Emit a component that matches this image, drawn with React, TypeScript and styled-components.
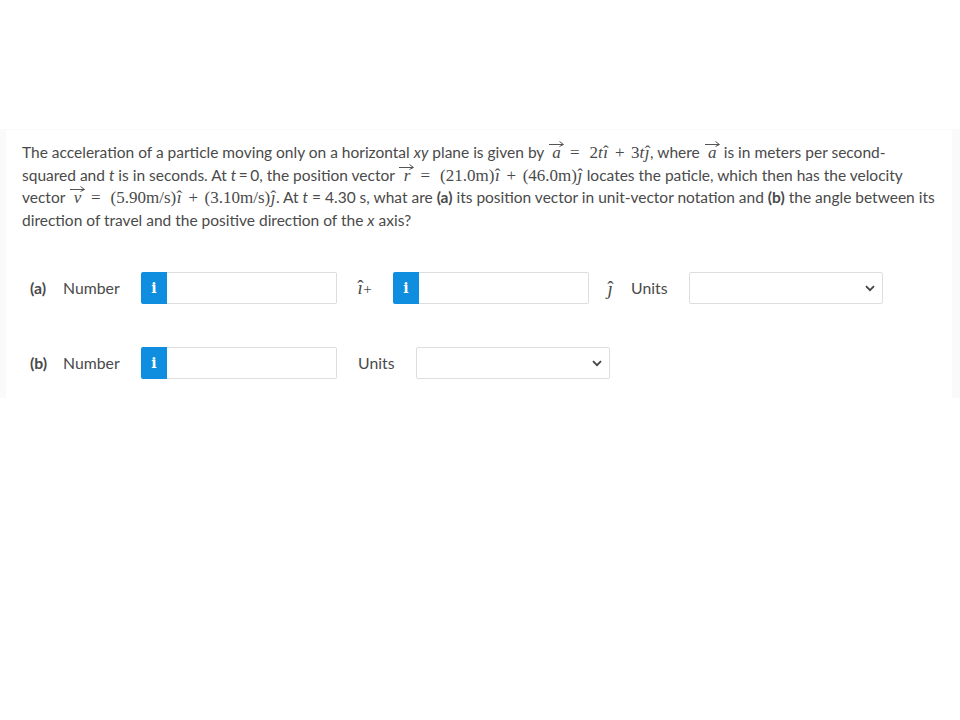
import React from 'react'
import styled, { createGlobalStyle } from 'styled-components'

const Global = createGlobalStyle`
  html, body {
    margin: 0;
    padding: 0;
    background: #fff;
  }
`

function App() {
  return (
    <>
      <Global />
      <Page>
        <Band>
          <Panel>
            <Question>
              The acceleration of a particle moving only on a horizontal <em>xy</em> plane is given by{' '}
              <Vec>a</Vec>
              <Equals>=</Equals>
              <MathText>2<i>t</i><Hat>ı</Hat><Plus>+</Plus>3<i>t</i><Hat>ȷ</Hat></MathText>, where <Vec>a</Vec> is in meters per second-
              <br />
              squared and <em>t</em> is in seconds. At <Tight><em>t</em> = 0,</Tight> the position vector <Vec>r</Vec>
              <Equals>=</Equals>
              <MathText>(21.0m)<Hat>ı</Hat><Plus>+</Plus>(46.0m)<Hat>ȷ</Hat></MathText> locates the paticle, which then has the velocity
              <br />
              vector <Vec>v</Vec>
              <Equals>=</Equals>
              <MathText>(5.90m/s)<Hat>ı</Hat><Plus>+</Plus>(3.10m/s)<Hat>ȷ</Hat></MathText>. At <em>t</em> = 4.30 s, what are <b>(a)</b> its
              position vector in unit-vector notation and <b>(b)</b> the angle between its
              <br />
              direction of travel and the positive direction of the <em>x</em> axis?
            </Question>
            <AnswerRow $top={41}>
              <PartLabel>(a)</PartLabel>
              <FieldLabel $width={78}>Number</FieldLabel>
              <NumberField />
              <Suffix $width={56} $pad={20}><Hat>ı</Hat><small>+</small></Suffix>
              <NumberField />
              <Suffix $width={42} $pad={18}><BigHat>ȷ</BigHat></Suffix>
              <FieldLabel $width={58}>Units</FieldLabel>
              <UnitsSelect />
            </AnswerRow>
            <AnswerRow $top={43}>
              <PartLabel>(b)</PartLabel>
              <FieldLabel $width={78}>Number</FieldLabel>
              <NumberField />
              <Suffix $width={21} $pad={0} />
              <FieldLabel $width={58}>Units</FieldLabel>
              <UnitsSelect />
            </AnswerRow>
          </Panel>
        </Band>
      </Page>
    </>
  )
}

function NumberField() {
  return (
    <InputWrap>
      <InfoButton>i</InfoButton>
      <Input type="text" />
    </InputWrap>
  )
}

function UnitsSelect() {
  return (
    <SelectBox>
      <svg width="10" height="7" viewBox="0 0 10 7">
        <path d="M1 1.2 L5 5.2 L9 1.2" fill="none" stroke="#444" strokeWidth="1.8" />
      </svg>
    </SelectBox>
  )
}

function Vec({ children }: { children: React.ReactNode }) {
  return (
    <VecWrap>
      <svg width="15" height="8" viewBox="0 0 15 8">
        <path d="M0 4.5 H14 M10.5 1.5 L14.5 4.5 L10.5 6.5" fill="none" stroke="#555" strokeWidth="1" />
      </svg>
      {children}
    </VecWrap>
  )
}

const Page = styled.div`
  padding-top: 129px;
  min-height: 591px;
  font-family: Lato, 'Open Sans', sans-serif;
  color: #4a4a4a;
`
const Band = styled.div`
  padding: 1px 8px 0 6px;
  background: #fafafa;
`
const Panel = styled.div`
  height: 268px;
  box-sizing: border-box;
  padding: 11px 14px 0 16px;
  background: #fff;
`
const Question = styled.p`
  margin: 0;
  font-size: 15.5px;
  line-height: 22.6px;
  white-space: nowrap;
`
const Tight = styled.span`
  word-spacing: -1.5px;
`
const MathText = styled.span`
  font-family: 'Liberation Serif', serif;
  font-size: 17px;
  line-height: 1;
  i {
    font-style: italic;
  }
`
const Equals = styled.span`
  font-family: 'Liberation Serif', serif;
  font-size: 17px;
  line-height: 1;
  margin: 0 10px 0 6px;
`
const Plus = styled.span`
  margin: 0 6.5px;
`
const VecWrap = styled.span`
  position: relative;
  display: inline-block;
  width: 15px;
  margin-left: 1px;
  line-height: 1;
  text-align: center;
  font-family: 'Liberation Serif', serif;
  font-size: 17px;
  font-style: italic;
  svg {
    position: absolute;
    left: 0;
    top: -4px;
  }
`
const Hat = styled.span`
  position: relative;
  display: inline-block;
  padding: 0 0.5px;
  line-height: 1;
  font-family: 'Liberation Serif', serif;
  font-size: 17px;
  font-style: italic;
  &::before {
    content: 'ˆ';
    position: absolute;
    left: 50%;
    top: -1px;
    transform: translateX(-45%);
    font-style: normal;
  }
`
const BigHat = styled(Hat)`
  font-size: 20px;
`
const AnswerRow = styled.div<{ $top: number }>`
  display: flex;
  align-items: center;
  height: 32px;
  margin-top: ${p => p.$top}px;
  padding-left: 8px;
  font-size: 15.8px;
`
const PartLabel = styled.b`
  width: 33px;
  margin-bottom: 2px;
  font-weight: 700;
`
const FieldLabel = styled.span<{ $width: number }>`
  flex: none;
  width: ${p => p.$width}px;
  margin-bottom: 2px;
`
const InputWrap = styled.div`
  flex: none;
  display: flex;
  width: 196px;
  height: 32px;
`
const InfoButton = styled.span`
  flex: none;
  width: 26px;
  border-radius: 2px 0 0 2px;
  background: #0f8ee0;
  color: #fff;
  font: 700 14px/32px 'DejaVu Serif', serif;
  text-align: center;
`
const Input = styled.input`
  flex: 1;
  min-width: 0;
  padding: 0;
  border: 1px solid #ddd;
  border-left: 0;
  border-radius: 0 2px 2px 0;
  outline: none;
`
const Suffix = styled.span<{ $width: number; $pad: number }>`
  flex: none;
  width: ${p => p.$width}px;
  box-sizing: border-box;
  padding-left: ${p => p.$pad}px;
  ${Hat} {
    font-size: 19px;
  }
  small {
    font-family: 'Liberation Serif', serif;
    font-size: 15px;
  }
`
const SelectBox = styled.div`
  flex: none;
  display: flex;
  align-items: center;
  justify-content: flex-end;
  width: 194px;
  height: 32px;
  box-sizing: border-box;
  padding-right: 7px;
  border: 1px solid #ddd;
  border-radius: 2px;
`

export default App
